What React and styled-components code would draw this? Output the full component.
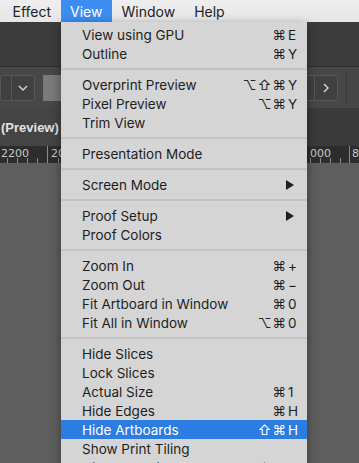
import React from "react";
import styled, { createGlobalStyle } from "styled-components";

const GlobalStyle = createGlobalStyle`
  html, body {
    margin: 0;
    padding: 0;
    overflow: hidden;
    background: #5e5e5e;
  }
`;

const UI_FONT = `"Inter", "DejaVu Sans", sans-serif`;

const MENU = [
  { label: "View using GPU", keys: ["⌘", "E"] },
  { label: "Outline", keys: ["⌘", "Y"] },
  "sep",
  { label: "Overprint Preview", keys: ["⌥⇧⌘", "Y"] },
  { label: "Pixel Preview", keys: ["⌥⌘", "Y"] },
  { label: "Trim View" },
  "sep",
  { label: "Presentation Mode" },
  "sep",
  { label: "Screen Mode", sub: true },
  "sep",
  { label: "Proof Setup", sub: true },
  { label: "Proof Colors" },
  "sep",
  { label: "Zoom In", keys: ["⌘", "+"] },
  { label: "Zoom Out", keys: ["⌘", "−"] },
  { label: "Fit Artboard in Window", keys: ["⌘", "0"] },
  { label: "Fit All in Window", keys: ["⌥⌘", "0"] },
  "sep",
  { label: "Hide Slices" },
  { label: "Lock Slices" },
  { label: "Actual Size", keys: ["⌘", "1"] },
  { label: "Hide Edges", keys: ["⌘", "H"] },
  { label: "Hide Artboards", keys: ["⇧⌘", "H"], active: true },
  { label: "Show Print Tiling" },
  { label: "Hide Bounding Box", keys: ["⇧⌘", "B"] },
];

const App = () => {
  return (
    <Screen>
      <GlobalStyle />
      <MenuBar>
        <BarItem>Effect</BarItem>
        <BarItem $open>View</BarItem>
        <BarItem>Window</BarItem>
        <BarItem>Help</BarItem>
      </MenuBar>

      <TopStrip />

      <Toolbar>
        <ToolGroup>
          <SegButton>
            <Seg $w={10} />
            <Seg $w={22}>
              <svg width="10" height="6" viewBox="0 0 10 6">
                <path d="M1 1 L5 5 L9 1" fill="none" stroke="#d8d8d8" strokeWidth="1.4" />
              </svg>
            </Seg>
          </SegButton>
          <Swatch />
        </ToolGroup>
        <ToolGroup>
          <SegButton>
            <Seg $w={8} />
            <Seg $w={22}>
              <svg width="6" height="10" viewBox="0 0 6 10">
                <path d="M1 1 L5 5 L1 9" fill="none" stroke="#d8d8d8" strokeWidth="1.4" />
              </svg>
            </Seg>
          </SegButton>
          <VSep />
        </ToolGroup>
      </Toolbar>

      <TabBar>
        <Tab>(Preview)</Tab>
      </TabBar>

      <Ruler>
        <svg width="359" height="17" viewBox="0 0 359 17">
          {[7, 17, 27, 37, 58, 68, 310, 320, 330, 340].map((x) => (
            <line key={x} x1={x + 0.5} x2={x + 0.5} y1="12" y2="17" stroke="#8a8a8a" />
          ))}
          <line x1="47.5" x2="47.5" y1="0" y2="17" stroke="#8a8a8a" />
          <line x1="349.5" x2="349.5" y1="0" y2="17" stroke="#8a8a8a" />
          <text x="1" y="11" fill="#c9c9c9" fontSize="11" fontFamily="DejaVu Sans, sans-serif">2200</text>
          <text x="51" y="11" fill="#c9c9c9" fontSize="11" fontFamily="DejaVu Sans, sans-serif">2000</text>
          <text x="310" y="11" fill="#c9c9c9" fontSize="11" fontFamily="DejaVu Sans, sans-serif">000</text>
          <text x="352" y="11" fill="#c9c9c9" fontSize="11" fontFamily="DejaVu Sans, sans-serif">8</text>
        </svg>
      </Ruler>

      <Canvas />

      <Dropdown>
        {MENU.map((item, i) =>
          item === "sep" ? (
            <Separator key={i} />
          ) : (
            <Item key={i} $active={item.active}>
              <Label>{item.label}</Label>
              {item.keys && (
                <Shortcut>
                  <Mods>{item.keys[0]}</Mods>
                  <Key>{item.keys[1]}</Key>
                </Shortcut>
              )}
              {item.sub && (
                <Arrow>
                  <svg width="8" height="10" viewBox="0 0 8 10">
                    <path d="M0 0 L8 5 L0 10 Z" fill="#1e1e1e" />
                  </svg>
                </Arrow>
              )}
            </Item>
          )
        )}
      </Dropdown>
    </Screen>
  );
};

const Screen = styled.div`
  position: relative;
  width: 359px;
  height: 463px;
  overflow: hidden;
  display: flex;
  flex-direction: column;
  background: #5e5e5e;
  font-family: ${UI_FONT};
`;

const MenuBar = styled.div`
  height: 22px;
  flex-shrink: 0;
  display: flex;
  align-items: stretch;
  padding-left: 3px;
  background: linear-gradient(#eeeeee, #e6e6e6);
  font-size: 14px;
`;

const BarItem = styled.div`
  display: flex;
  align-items: center;
  padding: 0 9.5px;
  color: ${(p) => (p.$open ? "#ffffff" : "#222222")};
  background: ${(p) => (p.$open ? "#3b8df1" : "transparent")};
`;

const TopStrip = styled.div`
  height: 44px;
  flex-shrink: 0;
  background: #3c3c3c;
  border-bottom: 1px solid #2e2e2e;
`;

const Toolbar = styled.div`
  height: 41px;
  flex-shrink: 0;
  display: flex;
  align-items: center;
  justify-content: space-between;
  padding-right: 12px;
  background: #474747;
`;

const ToolGroup = styled.div`
  display: flex;
  align-items: center;
  gap: 8px;
`;

const SegButton = styled.div`
  display: flex;
  height: 24px;
  border: 1px solid #585858;
  border-radius: 3px;
  background: #404040;
  overflow: hidden;
`;

const Seg = styled.div`
  width: ${(p) => p.$w}px;
  display: flex;
  align-items: center;
  justify-content: center;
  & + & {
    border-left: 1px solid #585858;
  }
`;

const Swatch = styled.div`
  width: 26px;
  height: 26px;
  background: #7a7a7a;
`;

const VSep = styled.div`
  width: 1px;
  height: 32px;
  background: #383838;
`;

const TabBar = styled.div`
  height: 38px;
  flex-shrink: 0;
  display: flex;
  background: #3a3a3a;
`;

const Tab = styled.div`
  width: 280px;
  display: flex;
  align-items: center;
  padding-left: 1px;
  background: #444444;
  color: #e2e2e2;
  font-family: "Liberation Sans", Arial, sans-serif;
  font-weight: 700;
  font-size: 13px;
`;

const Ruler = styled.div`
  height: 17px;
  flex-shrink: 0;
  background: #2d2d2d;
  svg {
    display: block;
  }
`;

const Canvas = styled.div`
  flex: 1;
  background: #5e5e5e;
`;

const Dropdown = styled.div`
  position: absolute;
  left: 61px;
  top: 22px;
  width: 246px;
  padding-top: 3px;
  background: #d5d5d5;
  box-shadow: 0 3px 10px rgba(0, 0, 0, 0.4);
  font-size: 13.5px;
`;

const Item = styled.div`
  height: 19px;
  display: flex;
  align-items: center;
  padding: 0 9px 0 21px;
  color: ${(p) => (p.$active ? "#ffffff" : "#1e1e1e")};
  background: ${(p) => (p.$active ? "#2b7de2" : "transparent")};
`;

const Label = styled.span`
  flex: 1;
  white-space: nowrap;
`;

const Shortcut = styled.span`
  display: flex;
  align-items: center;
`;

const Mods = styled.span`
  letter-spacing: 1px;
  text-align: right;
`;

const Key = styled.span`
  width: 10px;
  margin-left: 1px;
`;

const Arrow = styled.span`
  display: flex;
  margin-right: 4px;
`;

const Separator = styled.div`
  height: 12px;
  display: flex;
  align-items: center;
  &::after {
    content: "";
    flex: 1;
    height: 2px;
    background: #c2c2c2;
  }
`;

export default App;
